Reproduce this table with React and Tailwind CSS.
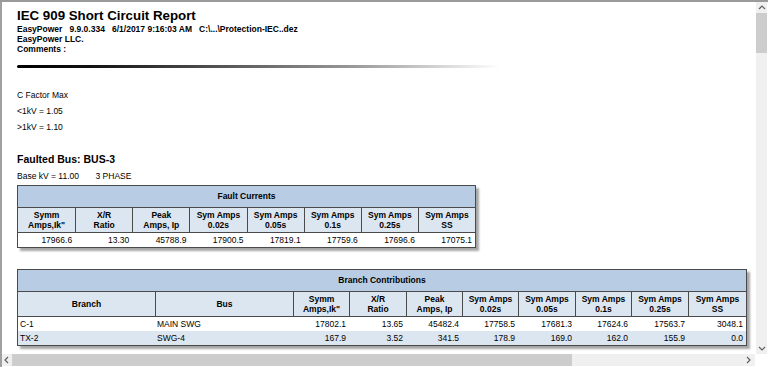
import React from 'react';

const faultCols = [
  ['Symm', 'Amps,Ik"'],
  ['X/R', 'Ratio'],
  ['Peak', 'Amps, Ip'],
  ['Sym Amps', '0.02s'],
  ['Sym Amps', '0.05s'],
  ['Sym Amps', '0.1s'],
  ['Sym Amps', '0.25s'],
  ['Sym Amps', 'SS'],
];

const faultRow = ['17966.6', '13.30', '45788.9', '17900.5', '17819.1', '17759.6', '17696.6', '17075.1'];

const branchCols = [['Branch'], ['Bus'], ...faultCols];

const branchRows = [
  ['C-1', 'MAIN SWG', '17802.1', '13.65', '45482.4', '17758.5', '17681.3', '17624.6', '17563.7', '3048.1'],
  ['TX-2', 'SWG-4', '167.9', '3.52', '341.5', '178.9', '169.0', '162.0', '155.9', '0.0'],
];

// small scrollbar chevrons
const Chevron = ({ dir }) => {
  const pts = {
    up: '1,5 4,2 7,5',
    down: '1,2 4,5 7,2',
    left: '5,1 2,4 5,7',
    right: '2,1 5,4 2,7',
  }[dir];
  return (
    <svg width="8" height="8" viewBox="0 0 8 8">
      <polyline points={pts} fill="none" stroke="#606060" strokeWidth="1.2" />
    </svg>
  );
};

const HeaderCells = ({ cols }) =>
  cols.map((c, i) => (
    <div
      key={i}
      className={`flex flex-col items-center justify-center leading-[10.5px] font-bold ${i > 0 ? 'border-l border-[#4a4a4a]' : ''}`}
    >
      {c.map((line, j) => (
        <span key={j}>{line}</span>
      ))}
    </div>
  ));

export default function App() {
  return (
    <div className="w-[768px] h-[367px] bg-white flex flex-col font-['Liberation_Sans',Arial,sans-serif] text-black overflow-hidden">
      <div className="flex flex-1 min-h-0 border-t-2 border-[#9a9a9a]">
        <div className="w-[2px] bg-[#a0a0a0]" />

        {/* report page */}
        <div className="flex-1 min-w-0 overflow-hidden pl-[15px] pt-[6px]">
          <div className="text-[13.3px] leading-[15px] font-bold">IEC 909 Short Circuit Report</div>
          <div className="mt-[1px] text-[8.5px] leading-[10px] font-bold">
            <div className="whitespace-pre">EasyPower   9.9.0.334   6/1/2017 9:16:03 AM   C:\...\Protection-IEC..dez</div>
            <div>EasyPower LLC.</div>
            <div>Comments :</div>
          </div>
          <div className="mt-[11px] h-[3px] w-[483px] rounded-l-full bg-[linear-gradient(to_right,#000_0%,#111_15%,#9a9a9a_70%,#fff_100%)]" />

          <div className="mt-[19px] text-[8.5px] leading-[16px]">
            <div>C Factor Max</div>
            <div>&lt;1kV = 1.05</div>
            <div>&gt;1kV = 1.10</div>
          </div>

          <div className="mt-[18px] text-[10.5px] leading-[13px] font-bold">Faulted Bus: BUS-3</div>
          <div className="mt-[5px] text-[8.5px] leading-[10px] whitespace-pre">Base kV = 11.00       3 PHASE</div>

          {/* Fault Currents */}
          <div className="mt-[4px] w-[459px] border border-[#4a4a4a] shadow-[3px_3px_2px_rgba(0,0,0,0.35)] text-[8.5px]">
            <div className="h-[22px] flex items-center justify-center bg-[#b8cce4] border-b border-[#4a4a4a] font-bold">
              Fault Currents
            </div>
            <div className="grid grid-cols-8 h-[25px] bg-[#dce6f1] border-b border-[#4a4a4a]">
              <HeaderCells cols={faultCols} />
            </div>
            <div className="grid grid-cols-8 h-[14px] leading-[15px] bg-white">
              {faultRow.map((v, i) => (
                <div key={i} className="text-right pr-[3px]">{v}</div>
              ))}
            </div>
          </div>

          {/* Branch Contributions */}
          <div className="mt-[21px] w-[730px] border border-[#4a4a4a] shadow-[3px_3px_2px_rgba(0,0,0,0.35)] text-[8.5px]">
            <div className="h-[22px] flex items-center justify-center bg-[#b8cce4] border-b border-[#4a4a4a] font-bold">
              Branch Contributions
            </div>
            <div className="grid grid-cols-[137px_138px_56px_57px_56px_56px_57px_56px_57px_58px] h-[25px] bg-[#dce6f1] border-b border-[#4a4a4a]">
              <HeaderCells cols={branchCols} />
            </div>
            {branchRows.map((row, r) => (
              <div
                key={r}
                className={`grid grid-cols-[137px_138px_56px_57px_56px_56px_57px_56px_57px_58px] h-[14px] leading-[15px] ${r % 2 ? 'bg-[#dce6f1]' : 'bg-white'}`}
              >
                {row.map((v, i) => (
                  <div key={i} className={i < 2 ? 'pl-[2px]' : 'text-right pr-[3px]'}>{v}</div>
                ))}
              </div>
            ))}
          </div>
        </div>

        {/* vertical scrollbar */}
        <div className="w-[13px] flex bg-white">
          <div className="w-[11px] ml-[1px] bg-[#f0f0f0] flex flex-col items-center">
            <div className="h-[11px] flex items-center justify-center"><Chevron dir="up" /></div>
            <div className="w-full h-[40px] bg-[#cdcdcd]" />
            <div className="flex-1" />
            <div className="h-[11px] flex items-center justify-center"><Chevron dir="down" /></div>
          </div>
        </div>
      </div>

      {/* horizontal scrollbar */}
      <div className="h-[13px] flex">
        <div className="w-[2px] bg-[#a0a0a0]" />
        <div className="flex-1 bg-[#f0f0f0] flex items-center mb-[1px]">
          <div className="w-[10px] flex justify-center"><Chevron dir="left" /></div>
          <div className="w-[560px] h-full bg-[#cdcdcd]" />
          <div className="flex-1" />
          <div className="w-[12px] flex justify-center"><Chevron dir="right" /></div>
        </div>
        <div className="w-[13px] bg-white" />
      </div>
    </div>
  );
}
